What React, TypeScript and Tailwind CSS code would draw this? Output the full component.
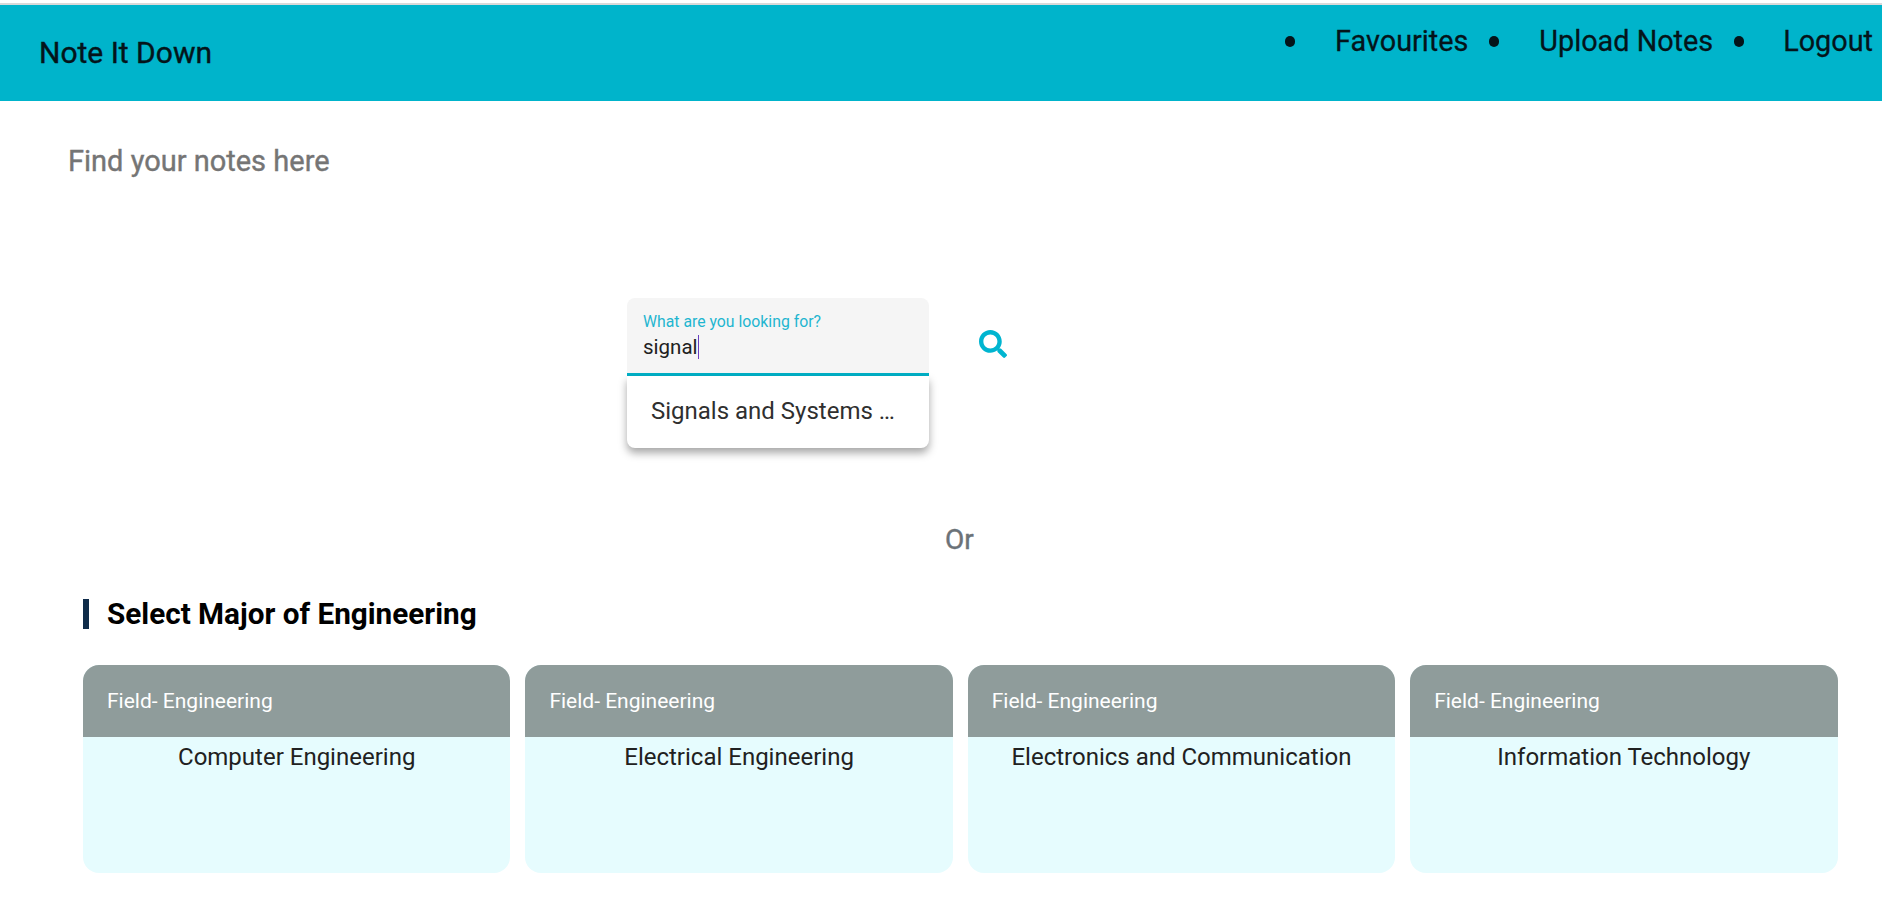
import React from "react";
import { FaSearch } from "react-icons/fa";

const majors = ["Computer Engineering", "Electrical Engineering", "Electronics and Communication", "Information Technology"];

function NavItem({ label, gap }: { label: string; gap: string }) {
  return (
    <li className="flex items-center">
      <span className="block w-[10px] h-[11px] rounded-full bg-[#04141a]" />
      <span className={`${gap} text-[28.8px] leading-[32px] text-[#04141a] [-webkit-text-stroke:0.3px_#04141a]`}>{label}</span>
    </li>
  );
}

export default function App() {
  return (
    <div className="w-[1882px] h-[898px] overflow-hidden bg-white font-['Roboto',sans-serif]">
      <div className="h-[3px] bg-white" />
      <div className="h-[2px] bg-[#d9d9d9]" />
      <header className="h-[96px] bg-[#00b4cb] flex justify-between pl-[39px] pr-[9px]">
        <div className="pt-[30px] text-[30px] leading-[36px] text-[#04141a] [-webkit-text-stroke:0.4px_#04141a]">Note It Down</div>
        <ul className="flex gap-[21px] items-start pt-[20px]">
          <NavItem label="Favourites" gap="ml-[40px]" />
          <NavItem label="Upload Notes" gap="ml-[40px]" />
          <NavItem label="Logout" gap="ml-[39px]" />
        </ul>
      </header>
      <main>
        <h2 className="pl-[68px] pt-[44px] text-[29px] leading-[32px] text-[#757575] [-webkit-text-stroke:0.4px_#757575]">Find your notes here</h2>
        <div className="flex pl-[627px] pt-[121px]">
          <div className="relative w-[302px]">
            <div className="h-[78px] rounded-t-[8px] bg-[#f5f5f5] border-b-[3px] border-[#00b0c6] pl-[16px] pt-[14px]">
              <div className="text-[15.8px] leading-[20px] text-[#1fb6d0]">What are you looking for?</div>
              <div className="flex items-center text-[20.5px] leading-[28px] text-[#212121] mt-[1px]">
                signal<span className="block w-[1px] h-[24px] bg-[#6a3fc0]" />
              </div>
            </div>
            <div className="absolute left-0 right-0 top-[78px] h-[72px] bg-white rounded-b-[8px] shadow-[0_5px_8px_rgba(0,0,0,0.35)] pl-[24px] pt-[19px] text-[24px] leading-[32px] text-[#2f2f2f]">
              Signals and Systems …
            </div>
          </div>
          <div className="ml-[50px] pt-[32px] text-[#00b5d0]">
            <FaSearch size={28} />
          </div>
        </div>
        <div className="pt-[146px] pl-[945px] text-[28px] leading-[36px] text-[#6b7278] [-webkit-text-stroke:0.4px_#6b7278]">Or</div>
        <div className="flex items-center pl-[83px] pt-[38px]">
          <span className="block w-[6px] h-[30px] bg-[#0f2c4a]" />
          <h3 className="ml-[18px] text-[29.7px] leading-[36px] font-bold text-black">Select Major of Engineering</h3>
        </div>
        <div className="grid grid-cols-4 gap-[15px] ml-[83px] mr-[44.5px] mt-[33px]">
          {majors.map((m) => (
            <div key={m} className="h-[208px] rounded-[16px] overflow-hidden bg-[#e6fcfe]">
              <div className="h-[72px] bg-[#8f9c9b] pl-[24px] pt-[22px] text-[21px] leading-[28px] text-white">Field- Engineering</div>
              <div className="pt-[5px] text-center text-[24px] leading-[30px] text-[#212121]">{m}</div>
            </div>
          ))}
        </div>
      </main>
    </div>
  );
}
